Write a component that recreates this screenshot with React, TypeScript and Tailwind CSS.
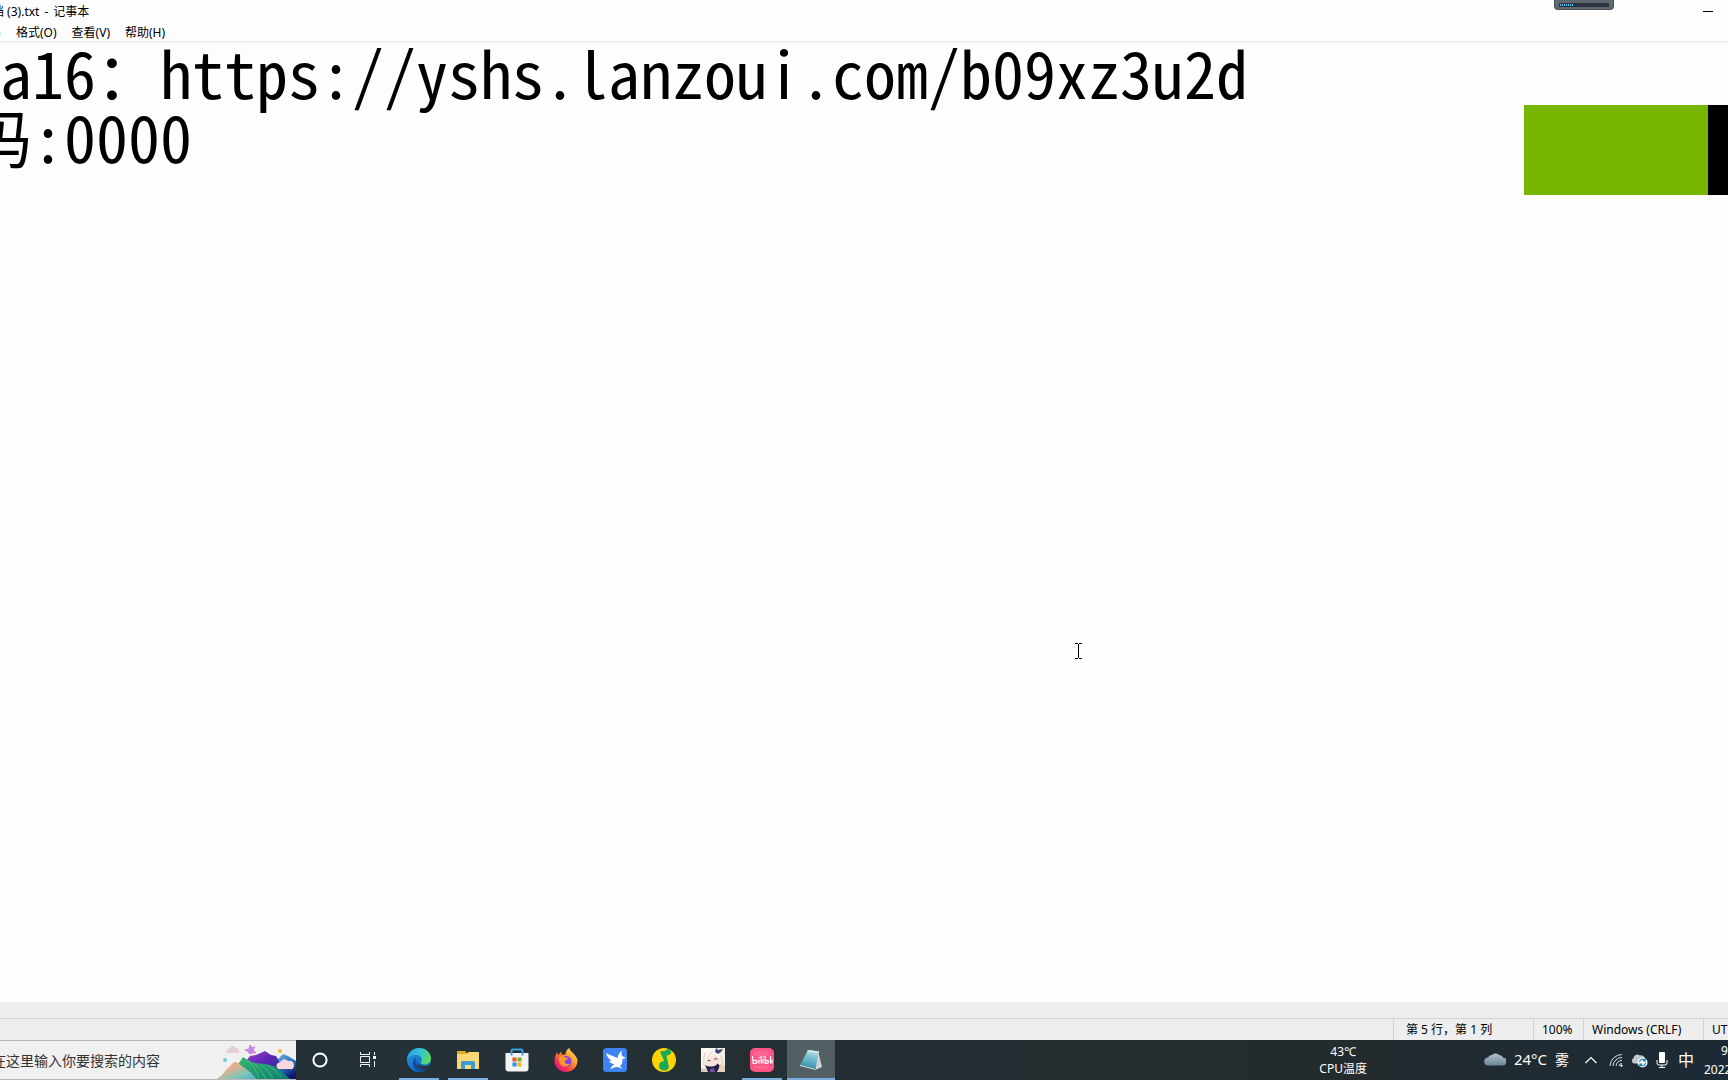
import React from 'react';

const NOTE = ' a16：https://yshs.lanzoui.com/b09xz3u2d\n码:0000';

const MENUS = ['格式(O)', '查看(V)', '帮助(H)'];

const CortanaIcon = () => (
  <svg viewBox="0 0 24 24" className="h-6 w-6">
    <circle cx="12" cy="12" r="6.6" fill="none" stroke="#fff" strokeWidth="2" />
  </svg>
);

const TaskViewIcon = () => (
  <svg viewBox="0 0 24 24" className="h-6 w-6" fill="none" stroke="#f4f6f7" strokeWidth="1">
    <path d="M4.5 4v2.500h9V4M4.500 19v-2.500h9V19M4.500 8.500h9v6h-9zM18.500 4v3M18.500 13v6" />
    <path d="M17 8h3v3h-3z" fill="#fff" stroke="none" />
  </svg>
);

const EdgeIcon = () => (
  <svg viewBox="0 0 24 24" className="h-6 w-6">
    <defs>
      <linearGradient id="edgeTop" x1="0" y1="0.3" x2="1" y2="0.6">
        <stop offset="0" stopColor="#2a9fe0" />
        <stop offset="0.5" stopColor="#33c3d6" />
        <stop offset="1" stopColor="#62d957" />
      </linearGradient>
      <linearGradient id="edgeBody" x1="0" y1="0" x2="0.6" y2="1">
        <stop offset="0" stopColor="#2a9be0" />
        <stop offset="1" stopColor="#0c62bd" />
      </linearGradient>
    </defs>
    <circle cx="12" cy="12" r="12" fill="url(#edgeBody)" />
    <path d="M0.200 11C1 4.500 6 0 12 0c7 0 12 5 12 10.500 0 3.700-2.800 6-6 6-2.600 0-4.300-1-4.300-2 0-.8 1.100-1.200 1.100-3C14.800 8.700 12 7 9 7 5 7 1.500 8.800.2 11z" fill="url(#edgeTop)" />
    <path d="M9.500 9.500c-2.500 1-3.500 3-3.500 5.500 0 4 3 8 8 8.700 3.500-.5 6.500-2.700 8.300-5.700-6 3-13.800.5-13.800-4.500 0-1.500.4-3 1-4z" fill="#124c93" />
    <path d="M22.300 18c.5-.9.200-1.200-.5-.8-5 2.300-11 .6-11.800-4.400-.7 6 5 9.700 9 8.500z" fill="#25353b" />
  </svg>
);

const ExplorerIcon = () => (
  <svg viewBox="0 0 24 24" className="h-6 w-6">
    <path d="M1 3h8l2 2h12v16H1z" fill="#e5a81f" />
    <path d="M1 6h10l1.500-2H23v17H1z" fill="#fbd876" />
    <path d="M5 21v-6.500q0-1.500 1.500-1.500h11q1.500 0 1.500 1.500V21h-4v-4H9v4z" fill="#3d9bd6" />
  </svg>
);

const StoreIcon = () => (
  <svg viewBox="0 0 24 24" className="h-6 w-6">
    <path d="M6.500 6V3q0-1.500 1.500-1.500h8q1.500 0 1.500 1.500v3" fill="none" stroke="#39a5e0" strokeWidth="2" />
    <path d="M.5 5h23v15.500q0 3-3 3h-17q-3 0-3-3z" fill="#f3f3f3" />
    <path d="M5.500 5h2v2.500h-2zM16.500 5h2v2.500h-2z" fill="#39a5e0" />
    <path d="M7.500 9.500h4v4h-4z" fill="#f25022" />
    <path d="M12.500 9.500h4v4h-4z" fill="#6fb32a" />
    <path d="M7.500 14.500h4v4h-4z" fill="#1e9be4" />
    <path d="M12.500 14.500h4v4h-4z" fill="#f5b51a" />
  </svg>
);

const FirefoxIcon = () => (
  <svg viewBox="0 0 24 24" className="h-6 w-6">
    <defs>
      <linearGradient id="fox" x1="0.9" y1="0.1" x2="0.2" y2="0.9">
        <stop offset="0" stopColor="#ffe046" />
        <stop offset="0.45" stopColor="#ff8b2d" />
        <stop offset="0.8" stopColor="#f9334c" />
        <stop offset="1" stopColor="#e31587" />
      </linearGradient>
    </defs>
    <path d="M3 4.500L4.500 7 7 3.500l1 3.500c1.500-.5 2.500-.5 3.500-.3C11.500 3.500 13 1 15.500 0c.3 2.500 2 3.600 4 5.500C22 8 23.500 10.500 23.500 13.500 23 19.500 18 24 12 24S.5 19 .5 13C.5 9.500 1.500 6.500 3 4.500z" fill="url(#fox)" />
    <circle cx="12" cy="13.500" r="5.500" fill="#8147dc" />
    <path d="M5 9c2-1.500 4.500-1.300 6 .5l3 .6c-.4 1.900-3 2-3.500 3.400 0 2 3 3.500 5.500 2-1.500 4-9 4.200-10.700-1C4.700 12.500 4.500 10.500 5 9z" fill="#ff9730" />
  </svg>
);

const BirdIcon = () => (
  <svg viewBox="0 0 24 24" className="h-6 w-6">
    <rect width="24" height="24" rx="3.500" fill="#3f83f1" />
    <path d="M3 5l3 1.500 8.500 3.500c.5-3 2.500-6 4-7.500.2 2.500-.2 4 .7 5.500l3.800 2-3.500 1c.3 3-.5 5.500-2.500 7l2.500 3-4.500-2c-2.500 0-5 .5-8 2.500 1-2.500 2.500-4 4.500-5.500-3-.3-4.500-1.300-5.500-3l3 .2C6.500 11.500 4 9 3 5z" fill="#fff" />
  </svg>
);

const MusicIcon = () => (
  <svg viewBox="0 0 24 24" className="h-6 w-6">
    <circle cx="12" cy="12" r="12" fill="#fdd305" />
    <path d="M8 3.500C11.500 3.500 15 2.300 16.500.5l3 3.200c-.3 2.400-3 3.600-5 4l2.200 10c.6 3-1.500 4.800-4.500 4.800s-5.200-1.700-5.200-4.500c0-3.200 2.300-5 5.200-4.800z" fill="#16a95c" />
  </svg>
);

const GameIcon = () => (
  <svg viewBox="0 0 24 24" className="h-6 w-6">
    <rect width="24" height="24" fill="#f1ebe4" />
    <path d="M6 8l9-3 4 6-2 7-6 2-5-3z" fill="#fbe3d6" />
    <path d="M0 0h14l5 5 2 7-3-2-5-4-4 4-4 2-1 7-4 2z" fill="#faf6f0" />
    <path d="M4 5q-2 6-1 13M12 3Q8 6 6 11M19 7q3 5 2 9" stroke="#d8cabb" fill="none" />
    <path d="M15 0l2 2 5-1-2 3-3 2-3-2z" fill="#3d4675" />
    <path d="M6.500 13q1.500-1.500 3 0M13 11.500q1.500-1.500 3.500-.5" fill="none" stroke="#5a4450" />
    <path d="M4 17q3 2 7 1.500 4-.5 6-3l2 3-3 5.500H7z" fill="#271d48" />
    <path d="M9 21l4-1 1 4H9z" fill="#6c559b" />
    <path d="M19 16l5 2v6h-7z" fill="#e6d1b4" />
    <path d="M0 20l5 1 2 3H0z" fill="#d9c9bc" />
  </svg>
);

const BilibiliIcon = () => (
  <svg viewBox="0 0 24 24" className="h-6 w-6">
    <rect width="24" height="24" rx="5" fill="#fb5585" />
    <path d="M4 4q8-2 16 0v4H4zM4 18h16v2q-8 2-16 0z" fill="#fc7099" opacity=".6" />
    <g fill="none" stroke="#fff" strokeWidth="1.200">
      <path d="M2.500 8l.7 7.500q4 .2 4-1.800t-3.800-1.200M9 11.500v4M11 8l.3 7.500M13 11v4.500M15 8l.3 7.500q3.200-.2 3.200-1.800t-3-1M20.500 8v7.500M22 11.500v4M9 9v1M13 8.500v1" />
    </g>
  </svg>
);

const NotepadIcon = () => (
  <svg viewBox="0 0 24 24" className="h-6 w-6">
    <defs>
      <linearGradient id="pad" x1="0.6" y1="0" x2="0.4" y2="1">
        <stop offset="0" stopColor="#b8dde6" />
        <stop offset="0.5" stopColor="#6cb6ca" />
        <stop offset="1" stopColor="#2f8eac" />
      </linearGradient>
    </defs>
    <path d="M19 3l4 16-6 2.500-1-4z" fill="#d0d4d4" />
    <path d="M9 2l11 1.500L16.500 21 1 17z" fill="url(#pad)" />
    <path d="M9 2l11 1.500-.4 1.500L8.200 3.500z" fill="#d9eaed" />
    <path d="M1 17l15.500 4 .5 1L1 18z" fill="#e3e7e8" />
  </svg>
);

const SearchArt = () => (
  <svg viewBox="0 0 80 38" className="h-[38px] w-20 shrink-0">
    <defs>
      <linearGradient id="hillA" x1="0" y1="0" x2="1" y2="1">
        <stop offset="0" stopColor="#f0a08c" />
        <stop offset="0.35" stopColor="#e4b08c" />
        <stop offset="0.7" stopColor="#7fc6ba" />
        <stop offset="1" stopColor="#4aa7d0" />
      </linearGradient>
      <linearGradient id="hillB" x1="0" y1="0" x2="1" y2="1">
        <stop offset="0" stopColor="#35b96b" />
        <stop offset="1" stopColor="#0d7c74" />
      </linearGradient>
      <linearGradient id="hillC" x1="0" y1="0" x2="1" y2="1">
        <stop offset="0" stopColor="#a347c4" />
        <stop offset="0.5" stopColor="#5b27b5" />
        <stop offset="1" stopColor="#2c2a9b" />
      </linearGradient>
      <linearGradient id="hillD" x1="0" y1="0" x2="0.6" y2="1">
        <stop offset="0" stopColor="#7eb8e6" />
        <stop offset="0.6" stopColor="#2470bd" />
        <stop offset="1" stopColor="#10156c" />
      </linearGradient>
    </defs>
    <path d="M58 22l9-9 5 2 8 5v18H58z" fill="url(#hillD)" />
    <path d="M30 20l4-5 6-1 9-4 6 4 5 1 5 9-4 6H44z" fill="url(#hillC)" />
    <path d="M21 38V25l6-9 3 2 8 4 11 1 9 2 8 6 8 7z" fill="url(#hillB)" />
    <path d="M31 19q8 6 12 18M37 21q8 7 13 17M44 23q8 5 13 14M51 24q8 4 14 12" fill="none" stroke="#5fcd8c" strokeWidth="1" opacity=".6" />
    <path d="M1 38q6-4 9-9l7-7q2-2 5 0l12 9 7 7z" fill="url(#hillA)" />
    <path d="M11 12q-2-4 3-5 3-4 6 0 4 0 3 5z" fill="#e6cfd2" />
    <path d="M62 28q-4-5 2-7 4-5 8-1 6-1 6 5-1 4-4 3z" fill="#f6d8de" />
    <path d="M34 4q2 4 5 2l-2 3 3 3q-4-1-5 1l-2-1q-1-2-4-3l4-1z" fill="#c985e6" stroke="#c985e6" />
    <circle cx="9" cy="19" r="2" fill="#6fcbd8" />
    <circle cx="64" cy="10" r="2" fill="#ecbd2c" />
  </svg>
);

const CloudIcon = () => (
  <svg viewBox="0 0 22 14" className="h-3.5 w-[22px]">
    <defs>
      <linearGradient id="cloud" x1="0" y1="0" x2="0" y2="1">
        <stop offset="0" stopColor="#b3c0cb" />
        <stop offset="1" stopColor="#6c8596" />
      </linearGradient>
    </defs>
    <path d="M4.500 12.500a4 4 0 0 1-.5-8A4 4 0 0 1 8 2a5 5 0 0 1 7 0 4 4 0 0 1 4 2.500 4 4 0 0 1-1 8z" fill="url(#cloud)" />
  </svg>
);

const ChevronIcon = () => (
  <svg viewBox="0 0 12 8" className="h-2 w-3" fill="none" stroke="#fff" strokeWidth="1.200">
    <path d="M.5 7L6 1.500 11.500 7" />
  </svg>
);

const WifiIcon = () => (
  <svg viewBox="0 0 14 14" className="h-3.5 w-3.5" fill="none" stroke="#dde2e5" strokeWidth="1">
    <path d="M1 13A12 12 0 0 1 13 1.500M4 13a9 9 0 0 1 9-8.500M7 13a6 6 0 0 1 6-5.500M10 13a3 3 0 0 1 3-2.500" />
    <circle cx="12.500" cy="12.700" r=".8" fill="#fff" />
  </svg>
);

const SyncIcon = () => (
  <svg viewBox="0 0 17 15" className="h-[15px] w-[17px]">
    <path d="M3 10.500a3 3 0 0 1-.5-5.500A4 4 0 0 1 9 2.500a4 4 0 0 1 5 3.500l-5 4.500z" fill="#c2c6c8" />
    <circle cx="11.500" cy="9.500" r="5" fill="#f0f6fa" />
    <path d="M8.500 9a3 3 0 0 1 5.300-1.500M14.500 10a3 3 0 0 1-5.300 1.500M14.200 5.500v2.300H12M8.800 13.500v-2.300H11" fill="none" stroke="#1d80b8" strokeWidth="1.200" />
  </svg>
);

const MicIcon = () => (
  <svg viewBox="0 0 12 18" className="h-[18px] w-3">
    <rect x="3" y="1" width="6" height="11" rx="1" fill="#fff" />
    <path d="M1 9v3q0 2 2 2h6q2 0 2-2V9M6 14v2M3 16.500h6" fill="none" stroke="#fff" strokeWidth="1" />
  </svg>
);

const APPS = [
  { name: 'Microsoft Edge', icon: <EdgeIcon />, running: true, active: false },
  { name: '文件资源管理器', icon: <ExplorerIcon />, running: true, active: false },
  { name: 'Microsoft Store', icon: <StoreIcon />, running: false, active: false },
  { name: 'Firefox', icon: <FirefoxIcon />, running: false, active: false },
  { name: '迅雷', icon: <BirdIcon />, running: false, active: false },
  { name: 'QQ音乐', icon: <MusicIcon />, running: false, active: false },
  { name: '原神', icon: <GameIcon />, running: false, active: false },
  { name: '哔哩哔哩', icon: <BilibiliIcon />, running: true, active: false },
  { name: '记事本', icon: <NotepadIcon />, running: true, active: true },
];

const Overlay: React.FC = () => (
  <>
    <div className="absolute top-0 right-[114px] flex h-2.5 w-[60px] items-center rounded-b border border-t-0 border-[#4b5058] bg-[#626870] px-1">
      <div className="flex h-1 w-full items-center gap-px bg-[#2d3441] pl-px">
        {[0, 1, 2, 3, 4, 5, 6].map(n => (
          <span key={n} className="h-0.5 w-px bg-[#5fc0ee]" />
        ))}
      </div>
    </div>
    <div className="absolute top-[105px] right-0 flex h-[90px] w-[204px] bg-black">
      <div className="w-[184px] bg-[#76b600]" />
    </div>
    <svg viewBox="0 0 8 16" className="absolute top-[643px] left-[1075px] h-4 w-2" fill="none" stroke="#000">
      <path d="M0 .5h3M4 .5h3M0 15.500h3M4 15.500h3M3.500 1v14" />
    </svg>
  </>
);

const Taskbar: React.FC = () => (
  <footer className="flex h-10 items-stretch overflow-hidden bg-linear-to-r from-[#24343a] via-[#242b2e] via-77% to-[#1b2a36] text-white">
    <label className="flex w-[296px] shrink-0 items-center overflow-hidden border-y border-[#b8b8b8] bg-[#f0f0f0]">
      <input
        type="text"
        aria-label="搜索"
        placeholder="在这里输入你要搜索的内容"
        className="-ml-2 h-full w-56 min-w-0 bg-transparent text-sm placeholder:text-[#333333] placeholder:opacity-100 focus:outline-none"
      />
      <SearchArt />
    </label>
    <button aria-label="Cortana" className="flex w-12 shrink-0 items-center justify-center"><CortanaIcon /></button>
    <button aria-label="任务视图" className="flex w-12 shrink-0 items-center justify-center"><TaskViewIcon /></button>
    <nav className="ml-[3px] flex gap-px">
      {APPS.map(app => (
        <button
          key={app.name}
          aria-label={app.name}
          className={`flex w-12 flex-col items-center justify-between pt-2 ${app.active ? 'bg-[#526063]' : ''}`}
        >
          {app.icon}
          {app.running && <span className={`h-0.5 bg-[#7aade0] ${app.active ? 'w-full' : 'w-10'}`} />}
        </button>
      ))}
    </nav>
    <div className="flex flex-1 justify-end">
      <div className="mr-[117px] flex flex-col items-center justify-center text-xs leading-[17px]">
        <span>43℃</span>
        <span>CPU温度</span>
      </div>
      <button className="mr-4 flex items-center gap-2 text-sm">
        <CloudIcon />
        <span className="text-[15px]">24°C</span>
        <span>雾</span>
      </button>
      <div className="flex items-center">
        <button aria-label="显示隐藏的图标" className="mr-3"><ChevronIcon /></button>
        <button aria-label="网络" className="mr-2"><WifiIcon /></button>
        <button aria-label="同步" className="mr-2"><SyncIcon /></button>
        <button aria-label="麦克风" className="mr-2.5"><MicIcon /></button>
        <button className="mr-2.5 text-base">中</button>
      </div>
      <div className="flex w-6 shrink-0 flex-col pt-px text-xs leading-[19px] whitespace-nowrap">
        <span className="pl-[17px]">9</span>
        <span>2022</span>
      </div>
    </div>
  </footer>
);

export default function App() {
  return (
    <div className="relative flex min-h-screen flex-col overflow-hidden bg-[#fdfdfd] font-['Noto_Sans','Noto_Sans_CJK_SC',sans-serif] text-xs text-black">
      <header className="flex h-[23px] items-center overflow-hidden">
        <h1 className="-ml-2 flex gap-[5px] whitespace-nowrap">
          <span>档 (3).txt</span>
          <span>-</span>
          <span>记事本</span>
        </h1>
        <button aria-label="最小化" className="mr-[15px] ml-auto flex h-full w-2.5 items-center">
          <span className="h-px w-full bg-black" />
        </button>
      </header>
      <nav className="flex h-5 items-center gap-[15px] overflow-hidden border-b-2 border-[#efefef] pt-0.5">
        <button className="-ml-1 w-[5px]">)</button>
        {MENUS.map(menu => (
          <button key={menu} className="whitespace-nowrap">{menu}</button>
        ))}
      </nav>
      <textarea
        aria-label="文本编辑器"
        defaultValue={NOTE}
        spellCheck={false}
        wrap="off"
        className="-mt-1 -ml-8 flex-1 resize-none overflow-hidden bg-transparent font-['Noto_Sans_Mono_CJK_SC','Noto_Sans_CJK_SC',monospace] text-[64px] leading-[64px] focus:outline-none"
      />
      <div className="h-4 bg-[#eeeeee]" />
      <div className="flex h-[22px] justify-end border-t border-[#d2d2d2] bg-[#eeeeee] leading-[21px] whitespace-nowrap">
        <span className="w-[140px] border-l border-[#d2d2d2] pl-3">第 5 行，第 1 列</span>
        <span className="w-[50px] border-l border-[#d2d2d2] pl-2">100%</span>
        <span className="w-[120px] border-l border-[#d2d2d2] pl-2">Windows (CRLF)</span>
        <span className="w-[25px] overflow-hidden border-l border-[#d2d2d2] pl-2">UTF-8</span>
      </div>
      <Taskbar />
      <Overlay />
    </div>
  );
}
